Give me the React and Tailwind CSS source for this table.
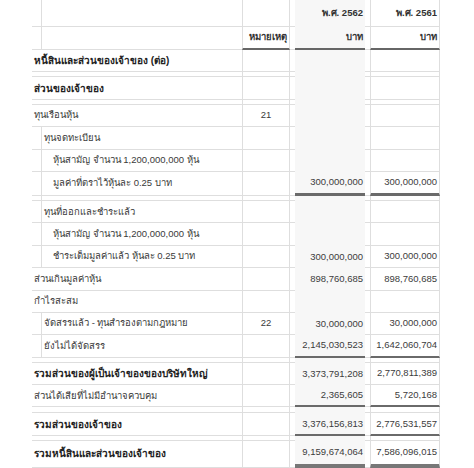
const grid = "grid grid-cols-[10px_200px_48px_5px_70px_5px_70px]";
const ln = "border-[#dedede]";

function underline(kind) {
  if (kind === "single") return "border-b-2 border-b-[#6a6a6a]";
  if (kind === "double") return "border-b-[3px] border-b-[#6a6a6a]";
  if (kind === "heavy") return "border-b-[4px] border-b-[#777777]";
  return "";
}

function Row({ label, level = 0, bold, note, a, b, line, h = "h-[22.4px]" }) {
  const text = bold ? "font-bold text-[10px] text-[#222]" : "text-[9.5px] text-[#3a3a3a]";
  return (
    <div className={`${grid} ${h}`}>
      {level === 0 ? (
        <div className={`col-span-2 flex items-center border-b ${ln} pl-[2px] ${text} whitespace-nowrap`}>
          {label}
        </div>
      ) : (
        <>
          <div className={`border-b border-r ${ln}`} />
          <div
            className={`flex items-center border-b ${ln} ${level === 2 ? "pl-[11px]" : "pl-[2px]"} ${text} whitespace-nowrap`}
          >
            {label}
          </div>
        </>
      )}
      <div className={`flex items-center justify-center border-b border-x ${ln} text-[9.5px] text-[#3a3a3a]`}>
        {note}
      </div>
      <div className={`border-b ${ln}`} />
      <div className={`flex items-center justify-end bg-[#f7f7f7] pr-[2px] text-[9.5px] text-[#3c3c3c] ${underline(line)}`}>
        {a}
      </div>
      <div className={`border-b ${ln}`} />
      <div
        className={`flex items-center justify-end border-x ${ln} pr-[2px] text-[9.5px] text-[#3c3c3c] ${
          line ? underline(line) : "border-b"
        }`}
      >
        {b}
      </div>
    </div>
  );
}

function Spacer({ indent, h = "h-[5px]" }) {
  return (
    <div className={`${grid} ${h}`}>
      {indent ? (
        <>
          <div className={`border-b border-r ${ln}`} />
          <div className={`border-b ${ln}`} />
        </>
      ) : (
        <div className={`col-span-2 border-b ${ln}`} />
      )}
      <div className={`border-b border-x ${ln}`} />
      <div className={`border-b ${ln}`} />
      <div className="bg-[#f7f7f7]" />
      <div className={`border-b ${ln}`} />
      <div className={`border-b border-x ${ln}`} />
    </div>
  );
}

export default function App() {
  return (
    <div className="h-[468px] w-[474px] overflow-hidden bg-white pl-[32px] font-['Liberation_Sans','DejaVu_Sans',sans-serif]">
      {/* header */}
      <div className={`${grid} h-[27px]`}>
        <div className={`border-b border-r ${ln}`} />
        <div className={`border-b ${ln}`} />
        <div className={`border-b border-x ${ln}`} />
        <div className={`border-b ${ln}`} />
        <div className="flex items-center justify-end bg-[#f7f7f7] pr-[2px] text-[9.5px] font-bold text-[#333]">
          พ.ศ. 2562
        </div>
        <div className={`border-b ${ln}`} />
        <div className={`flex items-center justify-end border-b border-x ${ln} pr-[2px] text-[9.5px] font-bold text-[#333]`}>
          พ.ศ. 2561
        </div>
      </div>
      <div className={`${grid} h-[23px]`}>
        <div className={`border-b border-r ${ln}`} />
        <div className={`border-b ${ln}`} />
        <div className={`flex items-center justify-end border-x ${ln} border-b-2 border-b-[#666666] pr-[2px] text-[9.5px] font-bold text-[#333]`}>
          หมายเหตุ
        </div>
        <div className={`border-b ${ln}`} />
        <div className="flex items-center justify-end border-b-2 border-b-[#666666] bg-[#f7f7f7] pr-[2px] text-[9.5px] font-bold text-[#333]">
          บาท
        </div>
        <div className={`border-b ${ln}`} />
        <div className={`flex items-center justify-end border-x ${ln} border-b-2 border-b-[#666666] pr-[2px] text-[9.5px] font-bold text-[#333]`}>
          บาท
        </div>
      </div>

      <Row label="หนี้สินและส่วนของเจ้าของ (ต่อ)" bold />
      <Spacer />
      <Row label="ส่วนของเจ้าของ" bold />
      <Spacer />
      <Row label="ทุนเรือนหุ้น" note="21" />
      <Row label="ทุนจดทะเบียน" level={1} />
      <Row label="หุ้นสามัญ จำนวน 1,200,000,000 หุ้น" level={2} />
      <Row label="มูลค่าที่ตราไว้หุ้นละ 0.25 บาท" level={2} a="300,000,000" b="300,000,000" line="double" h="h-[24px]" />
      <Spacer indent />
      <Row label="ทุนที่ออกและชำระแล้ว" level={1} />
      <Row label="หุ้นสามัญ จำนวน 1,200,000,000 หุ้น" level={2} />
      <Row label="ชำระเต็มมูลค่าแล้ว หุ้นละ 0.25 บาท" level={2} a="300,000,000" b="300,000,000" />
      <Row label="ส่วนเกินมูลค่าหุ้น" a="898,760,685" b="898,760,685" />
      <Row label="กำไรสะสม" />
      <Row label="จัดสรรแล้ว - ทุนสำรองตามกฎหมาย" level={1} note="22" a="30,000,000" b="30,000,000" />
      <Row label="ยังไม่ได้จัดสรร" level={1} a="2,145,030,523" b="1,642,060,704" line="single" />
      <Spacer />
      <Row label="รวมส่วนของผู้เป็นเจ้าของของบริษัทใหญ่" bold a="3,373,791,208" b="2,770,811,389" />
      <Row label="ส่วนได้เสียที่ไม่มีอำนาจควบคุม" a="2,365,605" b="5,720,168" line="single" />
      <Spacer h="h-[6px]" />
      <Row label="รวมส่วนของเจ้าของ" bold a="3,376,156,813" b="2,776,531,557" line="single" />
      <Spacer />
      <Row label="รวมหนี้สินและส่วนของเจ้าของ" bold a="9,159,674,064" b="7,586,096,015" line="heavy" h="h-[27px]" />
    </div>
  );
}
